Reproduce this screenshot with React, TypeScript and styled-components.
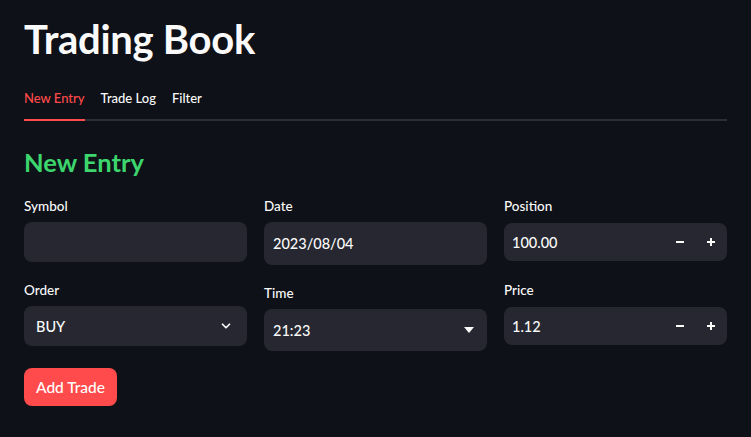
import React from 'react';
import styled, { createGlobalStyle } from 'styled-components';

const GlobalStyle = createGlobalStyle`
  html, body {
    margin: 0;
    padding: 0;
    background: #0e1117;
  }
  body {
    font-family: Lato, "Liberation Sans", sans-serif;
    color: #fafafa;
  }
`;

const Page = styled.div`
  width: 751px;
  height: 437px;
  box-sizing: border-box;
  padding: 14px 24px 0 24px;
  background: #0e1117;
  overflow: hidden;
`;

const Title = styled.h1`
  margin: 0;
  font-size: 40px;
  font-weight: 700;
  line-height: 50px;
  letter-spacing: -0.3px;
`;

const TabBar = styled.div`
  display: flex;
  gap: 16px;
  margin-top: 24px;
  border-bottom: 2px solid #2c2d35;
`;

const Tab = styled.div<{ $active?: boolean }>`
  font-size: 13px;
  font-weight: 500;
  line-height: 20px;
  padding-bottom: 11px;
  margin-bottom: -2px;
  color: ${(p) => (p.$active ? '#ff4b4b' : '#fafafa')};
  border-bottom: 2px solid ${(p) => (p.$active ? '#ff4b4b' : 'transparent')};
`;

const Heading = styled.h3`
  margin: 24px 0 0 0;
  font-size: 25.5px;
  line-height: 34px;
  font-weight: 700;
  color: #3dd56d;
`;

const FormGrid = styled.div`
  display: grid;
  grid-template-columns: repeat(3, 1fr);
  column-gap: 17px;
  margin-top: 17px;
  align-items: start;
`;

const Column = styled.div`
  display: flex;
  flex-direction: column;
  gap: 18px;
`;

const Field = styled.div`
  display: flex;
  flex-direction: column;
  gap: 6px;
`;

const Label = styled.label`
  font-size: 13.5px;
  font-weight: 500;
  line-height: 20px;
  color: #fafafa;
`;

const InputBox = styled.div<{ $h?: number; $pl?: number; $pr?: number }>`
  height: ${(p) => p.$h ?? 40}px;
  box-sizing: border-box;
  background: #262730;
  border-radius: 8px;
  display: flex;
  align-items: center;
  padding: 0 ${(p) => p.$pr ?? 10}px 0 ${(p) => p.$pl ?? 9}px;
  font-size: 14.5px;
  font-weight: 500;
  color: #fafafa;
`;

const NumberBox = styled(InputBox)`
  margin: 1px 0;
`;

const Value = styled.span`
  flex: 1;
`;

const StepButton = styled.span`
  width: 31px;
  display: flex;
  justify-content: center;
  align-items: center;
`;

const AddButton = styled.button`
  margin-top: 17px;
  height: 38px;
  padding: 0 12px;
  border: none;
  border-radius: 8px;
  background: #ff4b4b;
  color: #fff;
  font-family: inherit;
  font-size: 15.5px;
  font-weight: 500;
`;

const Chevron = () => (
  <svg width="14" height="14" viewBox="0 0 24 24" fill="none" stroke="#fafafa" strokeWidth="3" strokeLinecap="round" strokeLinejoin="round">
    <path d="M6 9l6 6 6-6" />
  </svg>
);

const Caret = () => (
  <svg width="12" height="8" viewBox="0 0 12 8">
    <path d="M1 1h10L6 7z" fill="#fafafa" />
  </svg>
);

const Minus = () => (
  <svg width="10" height="10" viewBox="0 0 10 10">
    <rect x="1" y="4" width="8" height="2" fill="#fafafa" />
  </svg>
);

const Plus = () => (
  <svg width="10" height="10" viewBox="0 0 10 10">
    <rect x="1" y="4" width="8" height="2" fill="#fafafa" />
    <rect x="4" y="1" width="2" height="8" fill="#fafafa" />
  </svg>
);

function NumberField({ label, value }: { label: string; value: string }) {
  return (
    <Field>
      <Label>{label}</Label>
      <NumberBox $h={38} $pl={8} $pr={1}>
        <Value>{value}</Value>
        <StepButton><Minus /></StepButton>
        <StepButton><Plus /></StepButton>
      </NumberBox>
    </Field>
  );
}

export default function App() {
  return (
    <Page>
      <GlobalStyle />
      <Title>Trading Book</Title>
      <TabBar>
        <Tab $active>New Entry</Tab>
        <Tab>Trade Log</Tab>
        <Tab>Filter</Tab>
      </TabBar>
      <Heading>New Entry</Heading>
      <FormGrid>
        <Column>
          <Field>
            <Label>Symbol</Label>
            <InputBox />
          </Field>
          <Field>
            <Label>Order</Label>
            <InputBox $pl={12} $pr={14}>
              <Value>BUY</Value>
              <Chevron />
            </InputBox>
          </Field>
        </Column>
        <Column>
          <Field>
            <Label>Date</Label>
            <InputBox $h={43}>
              <Value>2023/08/04</Value>
            </InputBox>
          </Field>
          <Field>
            <Label>Time</Label>
            <InputBox $h={42} $pr={12}>
              <Value>21:23</Value>
              <Caret />
            </InputBox>
          </Field>
        </Column>
        <Column>
          <NumberField label="Position" value="100.00" />
          <NumberField label="Price" value="1.12" />
        </Column>
      </FormGrid>
      <AddButton type="button">Add Trade</AddButton>
    </Page>
  );
}
